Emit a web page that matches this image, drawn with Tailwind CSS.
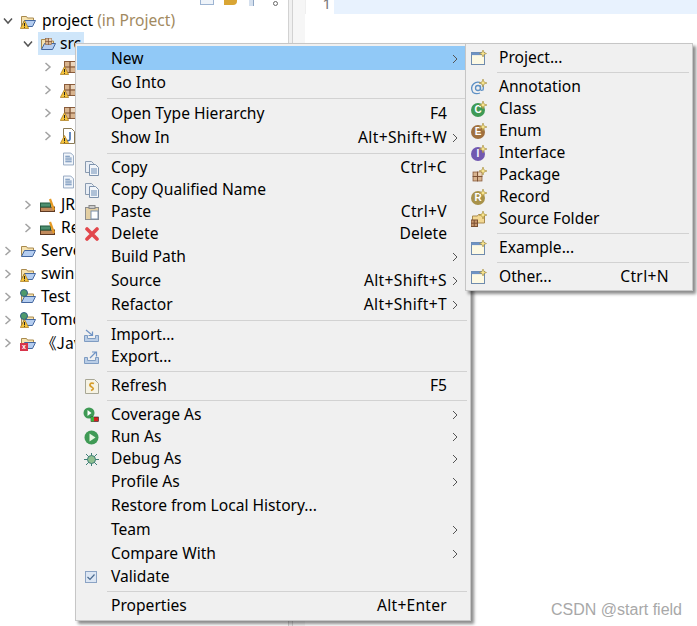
<!DOCTYPE html>
<html lang="en">
<head>
  <meta charset="UTF-8" />
  <title>Eclipse context menu</title>
  <script src="https://cdn.jsdelivr.net/npm/@tailwindcss/browser@4"></script>
</head>
<body class="bg-white">

<svg class="hidden">
  <defs>
    <symbol id="warn" viewBox="0 0 9 9"><path d="M4.500 .5 8.700 8.500H.3Z" fill="#f5c33b" stroke="#a8781c" stroke-width=".7"/><path d="M4.500 3v3M4.500 6.800v1" stroke="#222" stroke-width="1"/></symbol>
    <symbol id="folder" viewBox="0 0 16 16"><path d="M1.500 13V3.500h5l1 1.500h6v3" fill="#f6e3b0" stroke="#a98a4e"/><path d="M1.500 13.500 4.500 7.500h11l-3 6Z" fill="#b4cdf0" stroke="#44679f"/></symbol>
    <symbol id="pkg" viewBox="0 0 16 16"><rect x="2.500" y="2.500" width="11" height="11" fill="#d8b48f" stroke="#8a5c3c"/><path d="M8 2v12M2 8h12" stroke="#7a4f32" stroke-width="1.200"/><rect x="9" y="3" width="4" height="4" fill="#ecd6bd"/></symbol>
    <symbol id="jfile" viewBox="0 0 14 16"><path d="M1.500 .5h8l3 3v12h-11Z" fill="#fff" stroke="#8a7a55"/><path d="M8 4v7q0 2-3 1.500" fill="none" stroke="#3f6fb0" stroke-width="1.600"/></symbol>
    <symbol id="doc" viewBox="0 0 12 14"><path d="M.5 .5h8l3 3v10H.5Z" fill="#f2f6fb" stroke="#8fa3bd"/><path d="M2.500 4h5M2.500 6h7M2.500 8h7M2.500 10h7" stroke="#5b80ad"/></symbol>
    <symbol id="books" viewBox="0 0 16 14"><rect x=".5" y="9" width="14" height="4.500" fill="#c08a5c" stroke="#5e3a22"/><rect x=".5" y="5" width="10" height="4" fill="#4d8f70" stroke="#245a3f"/><path d="M10 1l4 11" stroke="#e59a25" stroke-width="2.200"/></symbol>
    <symbol id="chev" viewBox="0 0 8 10"><path d="M1.500 1 6 5 1.500 9" fill="none" stroke="#a2a2a2" stroke-width="1.500"/></symbol>
    <symbol id="chevd" viewBox="0 0 10 8"><path d="M1 1.500 5 6l4-4.500" fill="none" stroke="#555" stroke-width="1.500"/></symbol>
    <symbol id="sub" viewBox="0 0 6 10"><path d="M1 1l4 4-4 4" fill="none" stroke="#555" stroke-width="1"/></symbol>
    <symbol id="spark" viewBox="0 0 8 8"><path d="M4 0l1 3 3 1-3 1-1 3-1-3-3-1 3-1Z" fill="#f7e48f" stroke="#a58a35" stroke-width=".6"/></symbol>
    <symbol id="newwin" viewBox="0 0 16 16"><rect x=".5" y="2.500" width="13" height="12" fill="#fdf9e3" stroke="#6f8bad"/><rect x=".5" y="2.500" width="13" height="2.600" fill="#6f93c4"/><path d="M12 0l1 2.500L15.500 3.500 13 4.500 12 7 11 4.500 8.500 3.500 11 2.500Z" fill="#f7e48f" stroke="#a58a35" stroke-width=".6"/></symbol>
    <symbol id="copy" viewBox="0 0 14 15"><path d="M.5 .5h6l2 2v9H.5Z" fill="#e9eef5" stroke="#8a9bb0"/><path d="M4.500 3.500h6l3 3v8h-9Z" fill="#f3f6fa" stroke="#7d92ad"/><path d="M6 8h6M6 10h6M6 12h6" stroke="#6d8db5"/></symbol>
  </defs>
</svg>

<div class="relative w-[697px] h-[626px] overflow-hidden bg-white flex font-['Noto_Sans',sans-serif] text-[15.6px] text-black">

  <!-- package explorer -->
  <div class="relative w-[288px] shrink-0">
    <div class="absolute top-0 left-[200px] flex gap-[10px] items-start h-[6px] overflow-hidden">
      <div class="w-[14px] h-[6px] -mt-px border border-[#9db4d2] bg-[#eef3f9]"></div>
      <div class="w-[13px] h-[5px] bg-[#d9a534] rounded-br"></div>
      <div class="w-[5px] h-[6px] ml-[2px] bg-[#d5e0ee] border-r border-[#8ea6c4]"></div>
      <div class="w-[5px] h-[5px] ml-[9px] mt-[1px] rounded-full border border-[#666]"></div>
    </div>
    <div class="pt-[9px]">
      <div class="flex items-center h-[23px]">
        <svg class="w-[10px] h-[8px] ml-[3px]"><use href="#chevd"/></svg>
        <span class="relative ml-[7px] w-[17px] h-[16px]"><svg class="w-[16px] h-[16px]"><use href="#folder"/></svg><svg class="absolute left-0 bottom-0 w-[9px] h-[9px]"><use href="#warn"/></svg></span>
        <span class="ml-[5px]">project <span class="text-[#a28a5f]">(in Project)</span></span>
      </div>
      <div class="flex items-center h-[23px]">
        <svg class="w-[10px] h-[8px] ml-[23px]"><use href="#chevd"/></svg>
        <div class="flex items-center ml-[5px] w-[46px] h-[23px] bg-[#cfe6fa]">
          <span class="relative ml-[2px] w-[17px] h-[16px]"><svg class="w-[16px] h-[16px]"><use href="#folder"/></svg><svg class="absolute left-[4px] top-[1px] w-[9px] h-[9px]"><use href="#pkg"/></svg></span>
          <span class="ml-[3px]">src</span>
        </div>
      </div>
      <div class="flex items-center h-[23px]"><svg class="w-[8px] h-[10px] ml-[44px]"><use href="#chev"/></svg><span class="relative ml-[8px] w-[16px] h-[16px]"><svg class="w-[16px] h-[16px] ml-[2px]"><use href="#pkg"/></svg><svg class="absolute left-0 bottom-0 w-[9px] h-[9px]"><use href="#warn"/></svg></span></div>
      <div class="flex items-center h-[23px]"><svg class="w-[8px] h-[10px] ml-[44px]"><use href="#chev"/></svg><span class="relative ml-[8px] w-[16px] h-[16px]"><svg class="w-[16px] h-[16px] ml-[2px]"><use href="#pkg"/></svg><svg class="absolute left-0 bottom-0 w-[9px] h-[9px]"><use href="#warn"/></svg></span></div>
      <div class="flex items-center h-[23px]"><svg class="w-[8px] h-[10px] ml-[44px]"><use href="#chev"/></svg><span class="relative ml-[8px] w-[16px] h-[16px]"><svg class="w-[16px] h-[16px] ml-[2px]"><use href="#pkg"/></svg><svg class="absolute left-0 bottom-0 w-[9px] h-[9px]"><use href="#warn"/></svg></span></div>
      <div class="flex items-center h-[23px]"><svg class="w-[8px] h-[10px] ml-[44px]"><use href="#chev"/></svg><span class="relative ml-[8px] w-[16px] h-[16px]"><svg class="w-[14px] h-[16px] ml-[2px]"><use href="#jfile"/></svg><svg class="absolute left-0 bottom-0 w-[9px] h-[9px]"><use href="#warn"/></svg></span></div>
      <div class="flex items-center h-[23px]"><svg class="w-[11px] h-[14px] ml-[63px]"><use href="#doc"/></svg></div>
      <div class="flex items-center h-[23px]"><svg class="w-[11px] h-[14px] ml-[63px]"><use href="#doc"/></svg></div>
      <div class="flex items-center h-[23px]"><svg class="w-[8px] h-[10px] ml-[24px]"><use href="#chev"/></svg><svg class="w-[16px] h-[14px] ml-[8px]"><use href="#books"/></svg><span class="ml-[5px]">JRE</span></div>
      <div class="flex items-center h-[23px]"><svg class="w-[8px] h-[10px] ml-[24px]"><use href="#chev"/></svg><svg class="w-[16px] h-[14px] ml-[8px]"><use href="#books"/></svg><span class="ml-[5px]">Ref</span></div>
      <div class="flex items-center h-[23px]"><svg class="w-[8px] h-[10px] ml-[4px]"><use href="#chev"/></svg><svg class="w-[16px] h-[16px] ml-[8px]"><use href="#folder"/></svg><span class="ml-[5px]">Servers</span></div>
      <div class="flex items-center h-[23px]"><svg class="w-[8px] h-[10px] ml-[4px]"><use href="#chev"/></svg><span class="relative ml-[8px] w-[16px] h-[16px]"><svg class="w-[16px] h-[16px]"><use href="#folder"/></svg><svg class="absolute left-0 bottom-0 w-[9px] h-[9px]"><use href="#warn"/></svg></span><span class="ml-[5px]">swing</span></div>
      <div class="flex items-center h-[23px]"><svg class="w-[8px] h-[10px] ml-[4px]"><use href="#chev"/></svg><span class="relative ml-[8px] w-[16px] h-[16px]"><svg class="w-[16px] h-[16px]"><use href="#folder"/></svg><span class="absolute left-0 top-0 w-[8px] h-[8px] rounded-full bg-[#4f9a6a] border border-[#2f5f86]"></span></span><span class="ml-[5px]">Test</span></div>
      <div class="flex items-center h-[23px]"><svg class="w-[8px] h-[10px] ml-[4px]"><use href="#chev"/></svg><span class="relative ml-[8px] w-[16px] h-[16px]"><svg class="w-[16px] h-[16px]"><use href="#folder"/></svg><span class="absolute left-0 top-0 w-[8px] h-[8px] rounded-full bg-[#4f9a6a] border border-[#2f5f86]"></span><svg class="absolute left-0 bottom-0 w-[9px] h-[9px]"><use href="#warn"/></svg></span><span class="ml-[5px]">Tomcat</span></div>
      <div class="flex items-center h-[23px]"><svg class="w-[8px] h-[10px] ml-[4px]"><use href="#chev"/></svg><span class="relative ml-[8px] w-[16px] h-[16px]"><svg class="w-[16px] h-[16px]"><use href="#folder"/></svg><span class="absolute left-0 bottom-0 w-[8px] h-[8px] bg-[#d8344a] text-white text-[7px] leading-[8px] text-center font-bold font-['Liberation_Sans',sans-serif]">x</span></span><span class="ml-[5px] font-['Noto_Sans_CJK_SC','Noto_Sans',sans-serif]">《Java</span></div>
    </div>
  </div>

  <!-- sash + editor -->
  <div class="w-[5px] h-full bg-[#f0f0f0] border-x border-[#d2d2d2]"></div>
  <div class="flex-1 flex items-start">
    <div class="w-[12px] h-full bg-[#f6f6f6]"></div>
    <div class="w-[29px] h-[14px] overflow-hidden relative border-l border-[#efefef]">
      <span class="absolute right-[3px] -top-[8px] text-[#787878] text-[15px]">1</span>
    </div>
    <div class="flex-1 h-[14px] bg-[#e8f2fe]"></div>
  </div>

  <!-- main context menu -->
  <div class="absolute left-[75px] top-[43px] w-[396px] h-[578px] bg-[#f0f0f0] border border-[#c6c6c6] shadow-[3px_3px_3px_rgba(0,0,0,0.45)] pt-[3px] px-px">
    <div class="flex items-center h-[24px] -mt-px mb-px pt-px bg-[#91c9f7]"><span class="ml-[34px]">New</span><svg class="ml-auto mr-[11px] w-[6px] h-[10px]"><use href="#sub"/></svg></div>
    <div class="flex items-center h-[24px]"><span class="ml-[34px]">Go Into</span></div>
    <div class="h-[7px] ml-[30px] mr-[2px] flex items-center"><div class="w-full h-px bg-[#d2d2d2]"></div></div>
    <div class="flex items-center h-[24px]"><span class="ml-[34px]">Open Type Hierarchy</span><span class="ml-auto mr-[22px]">F4</span></div>
    <div class="flex items-center h-[24px]"><span class="ml-[34px]">Show In</span><span class="ml-auto mr-[5px] tracking-[0.35px]">Alt+Shift+W</span><svg class="mr-[11px] w-[6px] h-[10px]"><use href="#sub"/></svg></div>
    <div class="h-[7px] ml-[30px] mr-[2px] flex items-center"><div class="w-full h-px bg-[#d2d2d2]"></div></div>
    <div class="flex items-center h-[22px]"><svg class="ml-[8px] w-[14px] h-[15px]"><use href="#copy"/></svg><span class="ml-[12px]">Copy</span><span class="ml-auto mr-[22px] tracking-[0.35px]">Ctrl+C</span></div>
    <div class="flex items-center h-[22px]"><svg class="ml-[8px] w-[14px] h-[15px]"><use href="#copy"/></svg><span class="ml-[12px]">Copy Qualified Name</span></div>
    <div class="flex items-center h-[22px]"><svg class="ml-[8px] w-[14px] h-[15px]" viewBox="0 0 14 15"><rect x=".5" y="2.500" width="13" height="12" fill="#e3cfa3" stroke="#8d8d8d"/><rect x="4" y=".5" width="6" height="3" fill="#c9c9c9" stroke="#888"/><rect x="6" y="6" width="7" height="8" fill="#fff" stroke="#7d92ad"/></svg><span class="ml-[12px]">Paste</span><span class="ml-auto mr-[22px] tracking-[0.35px]">Ctrl+V</span></div>
    <div class="flex items-center h-[22px]"><svg class="ml-[8px] w-[14px] h-[14px]" viewBox="0 0 14 14"><path d="M2 2l10 10M12 2 2 12" stroke="#e2474c" stroke-width="3.600" stroke-linecap="round"/></svg><span class="ml-[12px]">Delete</span><span class="ml-auto mr-[22px]">Delete</span></div>
    <div class="flex items-center h-[24px]"><span class="ml-[34px]">Build Path</span><svg class="ml-auto mr-[11px] w-[6px] h-[10px]"><use href="#sub"/></svg></div>
    <div class="flex items-center h-[24px]"><span class="ml-[34px]">Source</span><span class="ml-auto mr-[5px] tracking-[0.35px]">Alt+Shift+S</span><svg class="mr-[11px] w-[6px] h-[10px]"><use href="#sub"/></svg></div>
    <div class="flex items-center h-[24px]"><span class="ml-[34px]">Refactor</span><span class="ml-auto mr-[5px] tracking-[0.35px]">Alt+Shift+T</span><svg class="mr-[11px] w-[6px] h-[10px]"><use href="#sub"/></svg></div>
    <div class="h-[7px] ml-[30px] mr-[2px] flex items-center"><div class="w-full h-px bg-[#d2d2d2]"></div></div>
    <div class="flex items-center h-[22px]"><svg class="ml-[7px] w-[15px] h-[13px]" viewBox="0 0 15 13"><path d="M.5 6.500v6h14v-6h-3v3h-8v-3Z" fill="#b9cde6" stroke="#7f9cc2"/><path d="M2 1l6 5M8.500 2.500V6.500H4.500" fill="none" stroke="#6f93c4" stroke-width="1.200"/></svg><span class="ml-[12px]">Import...</span></div>
    <div class="flex items-center h-[22px]"><svg class="ml-[7px] w-[15px] h-[13px]" viewBox="0 0 15 13"><path d="M.5 6.500v6h14v-6h-3v3h-8v-3Z" fill="#b9cde6" stroke="#7f9cc2"/><path d="M6 7l6-6M8 1h4.500v4.500" fill="none" stroke="#6f93c4" stroke-width="1.200"/></svg><span class="ml-[12px]">Export...</span></div>
    <div class="h-[7px] ml-[30px] mr-[2px] flex items-center"><div class="w-full h-px bg-[#d2d2d2]"></div></div>
    <div class="flex items-center h-[22px]"><svg class="ml-[8px] w-[14px] h-[15px]" viewBox="0 0 14 15"><path d="M.5 .5h9l4 4v10H.5Z" fill="#f6f3e4" stroke="#a8a795"/><path d="M9 4.500C5 3 4 6 6 7.500S10 10 6 11.500" fill="none" stroke="#d69c2a" stroke-width="1.700"/></svg><span class="ml-[12px]">Refresh</span><span class="ml-auto mr-[22px]">F5</span></div>
    <div class="h-[7px] ml-[30px] mr-[2px] flex items-center"><div class="w-full h-px bg-[#d2d2d2]"></div></div>
    <div class="flex items-center h-[22px]"><svg class="ml-[6px] w-[16px] h-[16px]" viewBox="0 0 16 16"><circle cx="6" cy="6" r="5.500" fill="#3f9a55"/><path d="M4.500 3l4 3-4 3Z" fill="#fff"/><rect x="8" y="10" width="7.500" height="4.500" fill="#d51f1f" stroke="#222" stroke-width=".6"/><rect x="8" y="10" width="3" height="4.500" fill="#3cb13c"/></svg><span class="ml-[12px]">Coverage As</span><svg class="ml-auto mr-[11px] w-[6px] h-[10px]"><use href="#sub"/></svg></div>
    <div class="flex items-center h-[22px]"><svg class="ml-[7px] w-[15px] h-[15px]" viewBox="0 0 15 15"><circle cx="7.500" cy="7.500" r="7" fill="#3f9a55"/><path d="M5.500 3.500l6 4-6 4Z" fill="#e6f5e1"/></svg><span class="ml-[12px]">Run As</span><svg class="ml-auto mr-[11px] w-[6px] h-[10px]"><use href="#sub"/></svg></div>
    <div class="flex items-center h-[22px]"><svg class="ml-[7px] w-[15px] h-[15px]" viewBox="0 0 15 15"><path d="M2 2l11 11M13 2 2 13M0 7.500h15M7.500 1v13" stroke="#3e7f76" stroke-width="1"/><circle cx="7.500" cy="7.500" r="4" fill="#8fbf8f" stroke="#3e7f76"/></svg><span class="ml-[12px]">Debug As</span><svg class="ml-auto mr-[11px] w-[6px] h-[10px]"><use href="#sub"/></svg></div>
    <div class="flex items-center h-[24px]"><span class="ml-[34px]">Profile As</span><svg class="ml-auto mr-[11px] w-[6px] h-[10px]"><use href="#sub"/></svg></div>
    <div class="flex items-center h-[24px]"><span class="ml-[34px]">Restore from Local History...</span></div>
    <div class="flex items-center h-[24px]"><span class="ml-[34px]">Team</span><svg class="ml-auto mr-[11px] w-[6px] h-[10px]"><use href="#sub"/></svg></div>
    <div class="flex items-center h-[24px]"><span class="ml-[34px]">Compare With</span><svg class="ml-auto mr-[11px] w-[6px] h-[10px]"><use href="#sub"/></svg></div>
    <div class="flex items-center h-[22px]"><svg class="ml-[8px] w-[12px] h-[12px]" viewBox="0 0 12 12"><rect x=".5" y=".5" width="11" height="11" fill="#dce6f3" stroke="#8ba3c4"/><path d="M2.500 6l2.500 2.500 4.500-5" fill="none" stroke="#4b6a8f" stroke-width="1.200"/></svg><span class="ml-[14px]">Validate</span></div>
    <div class="h-[7px] ml-[30px] mr-[2px] flex items-center"><div class="w-full h-px bg-[#d2d2d2]"></div></div>
    <div class="flex items-center h-[22px]"><span class="ml-[34px]">Properties</span><span class="ml-auto mr-[22px] tracking-[0.25px]">Alt+Enter</span></div>
  </div>

  <!-- New submenu -->
  <div class="absolute left-[465px] top-[43px] w-[228px] h-[248px] bg-[#f0f0f0] border border-[#c6c6c6] shadow-[3px_3px_3px_rgba(0,0,0,0.45)] pt-[3px] px-px">
    <div class="flex items-center h-[22px]"><svg class="ml-[4px] w-[16px] h-[16px]"><use href="#newwin"/></svg><span class="ml-[12px]">Project...</span></div>
    <div class="h-[7px] ml-[30px] mr-[2px] flex items-center"><div class="w-full h-px bg-[#d2d2d2]"></div></div>
    <div class="flex items-center h-[22px]"><span class="relative ml-[4px] w-[16px] h-[16px]"><svg class="w-[14px] h-[14px] mt-[2px]" viewBox="0 0 14 14"><circle cx="7" cy="7" r="2.500" fill="none" stroke="#5c8fc4" stroke-width="1.300"/><path d="M9.500 4.500v3.500q0 2 2.500 1 1-4-1-6.500Q6 -.5 2.500 3t-.5 8.500q3 2 7 .5" fill="none" stroke="#5c8fc4" stroke-width="1.300"/></svg><svg class="absolute right-0 top-0 w-[8px] h-[8px]"><use href="#spark"/></svg></span><span class="ml-[12px]">Annotation</span></div>
    <div class="flex items-center h-[22px]"><span class="relative ml-[4px] w-[16px] h-[16px]"><span class="absolute left-0 top-[2px] w-[14px] h-[14px] rounded-full bg-[#3f9a55] text-white text-[10px] leading-[14px] text-center font-bold font-['Liberation_Sans',sans-serif]">C</span><svg class="absolute right-0 top-0 w-[8px] h-[8px]"><use href="#spark"/></svg></span><span class="ml-[12px]">Class</span></div>
    <div class="flex items-center h-[22px]"><span class="relative ml-[4px] w-[16px] h-[16px]"><span class="absolute left-0 top-[2px] w-[14px] h-[14px] rounded-full bg-[#a0703e] text-white text-[10px] leading-[14px] text-center font-bold font-['Liberation_Sans',sans-serif]">E</span><svg class="absolute right-0 top-0 w-[8px] h-[8px]"><use href="#spark"/></svg></span><span class="ml-[12px]">Enum</span></div>
    <div class="flex items-center h-[22px]"><span class="relative ml-[4px] w-[16px] h-[16px]"><span class="absolute left-0 top-[2px] w-[14px] h-[14px] rounded-full bg-[#7158b0] text-white text-[10px] leading-[14px] text-center font-bold font-['Liberation_Sans',sans-serif]">I</span><svg class="absolute right-0 top-0 w-[8px] h-[8px]"><use href="#spark"/></svg></span><span class="ml-[12px]">Interface</span></div>
    <div class="flex items-center h-[22px]"><span class="relative ml-[4px] w-[16px] h-[16px]"><svg class="absolute left-0 top-[3px] w-[13px] h-[13px]"><use href="#pkg"/></svg><svg class="absolute right-0 top-0 w-[8px] h-[8px]"><use href="#spark"/></svg></span><span class="ml-[12px]">Package</span></div>
    <div class="flex items-center h-[22px]"><span class="relative ml-[4px] w-[16px] h-[16px]"><span class="absolute left-0 top-[2px] w-[14px] h-[14px] rounded-full bg-[#a8924a] text-white text-[10px] leading-[14px] text-center font-bold font-['Liberation_Sans',sans-serif]">R</span><svg class="absolute right-0 top-0 w-[8px] h-[8px]"><use href="#spark"/></svg></span><span class="ml-[12px]">Record</span></div>
    <div class="flex items-center h-[22px]"><span class="relative ml-[4px] w-[16px] h-[16px]"><svg class="absolute left-0 top-0 w-[16px] h-[16px]" viewBox="0 0 16 16"><path d="M1.500 12V5h5l1-1.500h6V12Z" fill="#f3d893" stroke="#a98a4e"/><rect x="0" y="9" width="6.500" height="6.500" fill="#c8996f" stroke="#7a4f32"/><path d="M3.200 9v6.500M0 12.200h6.500" stroke="#7a4f32"/></svg><svg class="absolute right-0 top-0 w-[8px] h-[8px]"><use href="#spark"/></svg></span><span class="ml-[12px]">Source Folder</span></div>
    <div class="h-[7px] ml-[30px] mr-[2px] flex items-center"><div class="w-full h-px bg-[#d2d2d2]"></div></div>
    <div class="flex items-center h-[22px]"><svg class="ml-[4px] w-[16px] h-[16px]"><use href="#newwin"/></svg><span class="ml-[12px]">Example...</span></div>
    <div class="h-[7px] ml-[30px] mr-[2px] flex items-center"><div class="w-full h-px bg-[#d2d2d2]"></div></div>
    <div class="flex items-center h-[22px]"><svg class="ml-[4px] w-[16px] h-[16px]"><use href="#newwin"/></svg><span class="ml-[12px]">Other...</span><span class="ml-auto mr-[22px] tracking-[0.35px]">Ctrl+N</span></div>
  </div>

  <div class="absolute right-[15px] bottom-[4px] text-[16px] text-[#a8a8a8] font-['Liberation_Sans',sans-serif]">CSDN @start field</div>
</div>

</body>
</html>
